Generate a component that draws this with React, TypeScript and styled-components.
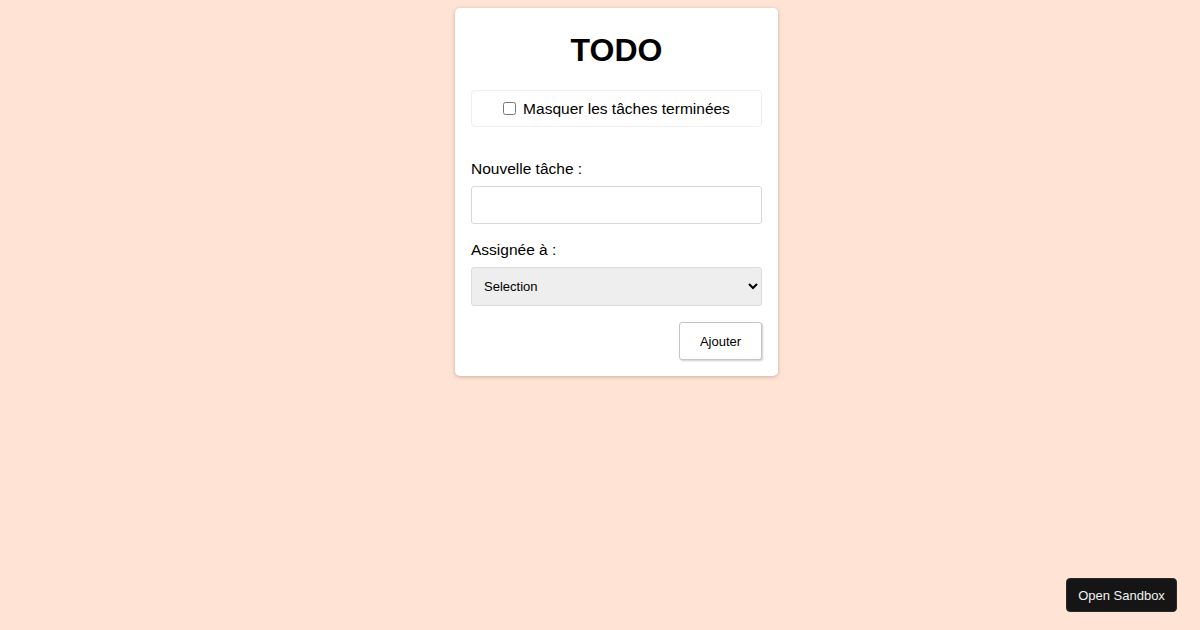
import React, {useState} from 'react';
import styled, {createGlobalStyle} from "styled-components";

const GlobalStyle = createGlobalStyle`
  html, body {
    margin: 0;
    padding: 0;
    background-color: #ffe4d5;
    font-family: "Liberation Sans", Arial, sans-serif;
    color: #000;
  }
`;

function App() {
  const [hideDone, setHideDone] = useState(false);
  const [task, setTask] = useState("");
  const [who, setWho] = useState("");

  return (
    <>
      <GlobalStyle />
      <Page>
        <Card>
          <Title>TODO</Title>
          <FilterBox>
            <input type="checkbox" checked={hideDone} onChange={() => setHideDone(!hideDone)} />
            <span>Masquer les tâches terminées</span>
          </FilterBox>

          <Form onSubmit={(e) => e.preventDefault()}>
            <Label htmlFor="task">Nouvelle tâche :</Label>
            <TextInput id="task" value={task} onChange={(e) => setTask(e.target.value)} />

            <Label htmlFor="who">Assignée à :</Label>
            <Select id="who" value={who} onChange={(e) => setWho(e.target.value)}>
              <option value="">Selection</option>
              <option value="alice">Alice</option>
              <option value="bob">Bob</option>
            </Select>

            <Actions>
              <AddButton type="submit">Ajouter</AddButton>
            </Actions>
          </Form>
        </Card>
      </Page>
      <SandboxButton>Open Sandbox</SandboxButton>
    </>
  );
}

export default App;

const Page = styled.div`
  min-height: 630px;
  box-sizing: border-box;
  display: flex;
  justify-content: center;
  align-items: flex-start;
  padding: 8px 0 0 33px;
`;

const Card = styled.div`
  width: 323px;
  box-sizing: border-box;
  padding: 24px 16px 16px;
  background-color: #ffffff;
  border-radius: 5px;
  box-shadow: 0 1px 4px rgba(120, 70, 40, 0.35);
`;

const Title = styled.h1`
  margin: 0 0 21px;
  font-size: 32px;
  line-height: 37px;
  font-weight: bold;
  text-align: center;
`;

const FilterBox = styled.label`
  display: flex;
  justify-content: center;
  align-items: center;
  gap: 7px;
  padding: 8px;
  border: 1px solid #eeeeee;
  border-radius: 4px;
  font-size: 15.5px;
  line-height: 19px;

  input {
    margin: 0;
    width: 13px;
    height: 13px;
  }
`;

const Form = styled.form`
  display: flex;
  flex-direction: column;
  margin-top: 33px;
`;

const Label = styled.label`
  font-size: 15.5px;
  line-height: 18px;
  margin-bottom: 8px;
`;

const TextInput = styled.input`
  height: 38px;
  box-sizing: border-box;
  border: 1px solid #d8d8d8;
  border-radius: 3px;
  padding: 0 8px;
  font-size: 14px;
  font-family: inherit;
  margin-bottom: 17px;
`;

const Select = styled.select`
  height: 39px;
  box-sizing: border-box;
  border: 1px solid #dddddd;
  border-radius: 3px;
  background-color: #eeeeee;
  padding: 0 8px;
  font-size: 13px;
  font-family: inherit;
  color: #000;
  margin-bottom: 16px;
`;

const Actions = styled.div`
  display: flex;
  justify-content: flex-end;
`;

const AddButton = styled.button`
  width: 83px;
  height: 38px;
  border: 1px solid #c4c4c4;
  border-radius: 3px;
  background-color: #ffffff;
  box-shadow: 1px 1px 2px rgba(0, 0, 0, 0.2);
  font-size: 13px;
  font-family: inherit;
  color: #000;
  cursor: pointer;
`;

const SandboxButton = styled.button`
  position: fixed;
  right: 23px;
  bottom: 18px;
  width: 111px;
  height: 34px;
  border: 1px solid #2a2a2a;
  border-radius: 4px;
  background-color: #151515;
  color: #f2f2f2;
  font-size: 13px;
  font-family: "Liberation Sans", Arial, sans-serif;
  cursor: pointer;
`;
